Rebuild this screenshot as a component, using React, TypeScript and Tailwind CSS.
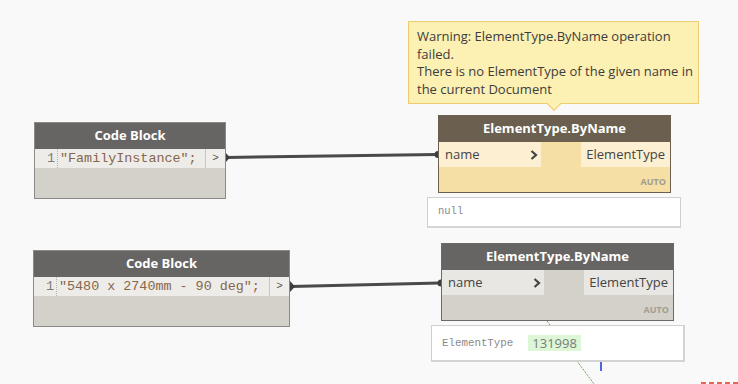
import React from "react";

const sans = "font-['Open_Sans',sans-serif]";
const mono = "font-['Liberation_Mono',monospace]";

interface CodeBlockProps {
    left: string
    top: string
    width: string
    code: string
}

const CodeBlock = ({left, top, width, code}: CodeBlockProps) => (
    <div className={`absolute ${left} ${top} ${width} h-[77px] border border-[#8c8a86] bg-[#d4d1ca] flex flex-col`}>
        <div className={`h-[26px] bg-[#676563] text-white text-[13px] font-bold ${sans} flex items-center justify-center`}>
            Code Block
        </div>
        <div className="h-[19px] flex bg-[#eeece8]">
            <div className={`w-[23px] pr-[2px] text-right text-[13.4px] leading-[19px] text-[#7d7d7d] ${mono} border-r border-dotted border-[#b5b3ae]`}>
                1
            </div>
            <div className={`flex-1 pl-[2px] text-[13.4px] leading-[19px] text-[#86664a] ${mono} whitespace-nowrap`}>
                {code}
            </div>
            <div className={`w-[20px] border-l border-[#c9c6c0] bg-[#efeeeb] text-[11px] leading-[19px] text-center text-[#555] ${mono}`}>
                &gt;
            </div>
        </div>
    </div>
)

interface ElementNodeProps {
    left: string
    top: string
    warn?: boolean
}

const ElementNode = ({left, top, warn}: ElementNodeProps) => {
    const head = warn ? "bg-[#6b604f]" : "bg-[#676563]"
    const body = warn ? "bg-[#f6dfa4] border-[#6b604f]" : "bg-[#d4d1ca] border-[#6c6a67]"
    const port = warn ? "bg-[#fcefd2]" : "bg-[#e9e7e3]"
    return (
        <div className={`absolute ${left} ${top} w-[233px] h-[78px] border ${body} flex flex-col ${sans}`}>
            <div className={`h-[26px] ${head} text-white text-[13px] font-bold flex items-center justify-center`}>
                ElementType.ByName
            </div>
            <div className="h-[25px] flex text-[13px] text-[#444]">
                <div className={`w-[102px] ${port} flex items-center justify-between pl-[6px] pr-[3px]`}>
                    <span>name</span>
                    <svg width="8" height="10" viewBox="0 0 8 10">
                        <path d="M1.5 1 L6 5 L1.5 9" fill="none" stroke="#444" strokeWidth="2.2"/>
                    </svg>
                </div>
                <div className="w-[40px]"/>
                <div className={`flex-1 ${port} flex items-center justify-end pr-[5px]`}>
                    ElementType
                </div>
            </div>
            <div className="flex-1 flex items-end justify-end pr-[4px] pb-[6px]">
                <span className="text-[9px] font-bold text-[#a39d8f] leading-none">AUTO</span>
            </div>
        </div>
    )
}

const App = () => {
    return (
        <div className="relative w-[738px] h-[384px] bg-[#f9f9f9] overflow-hidden">
            {/* wires */}
            <svg className="absolute left-0 top-0" width="738" height="384">
                <path d="M226 157.5 L437 154.5" stroke="#4a4a4a" strokeWidth="3" fill="none"/>
                <path d="M291 286.5 L440 283" stroke="#4a4a4a" strokeWidth="3" fill="none"/>
                <path d="M225 152 L230 157.5 L225 163 Z" fill="#3e3e3e"/>
                <path d="M290 281 L295 286.5 L290 292 Z" fill="#3e3e3e"/>
                <circle cx="438" cy="154.5" r="3.5" fill="#3e3e3e"/>
                <circle cx="441" cy="283" r="3.5" fill="#3e3e3e"/>
                <path d="M547 321 L550 325" stroke="#3c8a2a" strokeWidth="1" strokeDasharray="1 1"/>
                <path d="M577 361 L594 384" stroke="#3c8a2a" strokeWidth="1" strokeDasharray="1 1"/>
                <path d="M601 361 L601 371" stroke="#1a33d6" strokeWidth="1.5"/>
                <path d="M701 383 L738 383" stroke="#e0302a" strokeWidth="1.5" strokeDasharray="5 3"/>
            </svg>

            {/* warning bubble */}
            <div className={`absolute left-[408px] top-[21px] w-[291px] h-[83px] bg-[#fcf0b3] border border-[#efcb72] pl-[8px] pt-[6px] text-[13px] leading-[17.7px] text-[#3d3d3d] ${sans}`}>
                <div>Warning: ElementType.ByName operation</div>
                <div>failed.</div>
                <div>There is no ElementType of the given name in</div>
                <div>the current Document</div>
                <div className="absolute left-[140px] bottom-[-6px] w-[10px] h-[10px] rotate-45 bg-[#fcf0b3] border-r border-b border-[#efcb72]"/>
            </div>

            <CodeBlock left="left-[34px]" top="top-[122px]" width="w-[192px]" code={'"FamilyInstance";'}/>
            <CodeBlock left="left-[33px]" top="top-[250px]" width="w-[257px]" code={'"5480 x 2740mm - 90 deg";'}/>

            <ElementNode left="left-[438px]" top="top-[115px]" warn/>
            <div className={`absolute left-[427px] top-[197px] w-[254px] h-[31px] bg-white border border-[#cfcfcf] border-b-2 border-b-[#d6d6d6] flex items-center pl-[10px] text-[10.5px] text-[#8a8a8a] ${mono}`}>
                null
            </div>

            <ElementNode left="left-[441px]" top="top-[243px]"/>
            <div className={`absolute left-[431px] top-[325px] w-[254px] h-[37px] bg-white border border-[#cfcfcf] border-b-2 border-b-[#d3d3d3] border-r-2 border-r-[#d3d3d3] flex items-center pl-[10px]`}>
                <span className={`text-[10.8px] text-[#8a8a8a] ${mono}`}>ElementType</span>
                <span className={`ml-[15px] px-[4px] h-[16px] leading-[16px] bg-[#dcf6d6] text-[13px] text-[#7b7b7b] ${sans}`}>131998</span>
            </div>
        </div>
    );
};
export default App
